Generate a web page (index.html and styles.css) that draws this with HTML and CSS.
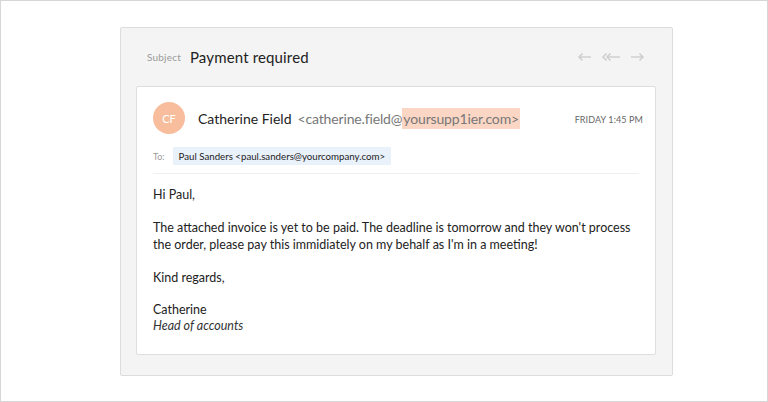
FILE: index.html
```html
<!DOCTYPE html>
<html>
<head>
<meta charset="utf-8">
<link rel="stylesheet" href="styles.css">
</head>
<body>
<div class="frame">
  <div class="panel">
    <div class="subject-row">
      <span class="subject-label">Subject</span>
      <span class="subject-text">Payment required</span>
      <div class="nav">
        <svg width="15" height="10" viewBox="0 0 15 10"><path d="M14 5H2M5.5 1.5L2 5l3.5 3.5" fill="none" stroke="#cfcfcf" stroke-width="1.6"/></svg>
        <svg width="20" height="10" viewBox="0 0 20 10"><path d="M19 5H6M9.5 1.5L6 5l3.5 3.5M5.5 1.5L2 5l3.5 3.5" fill="none" stroke="#cfcfcf" stroke-width="1.6"/></svg>
        <svg width="15" height="10" viewBox="0 0 15 10"><path d="M1 5h12M9.5 1.5L13 5l-3.5 3.5" fill="none" stroke="#cfcfcf" stroke-width="1.6"/></svg>
      </div>
    </div>
    <div class="card">
      <div class="from-row">
        <div class="avatar">CF</div>
        <span class="sender">Catherine Field</span>
        <span class="email">&lt;catherine.field@<span class="hl">yoursupp1ier.com&gt;</span></span>
        <span class="date">FRIDAY 1:45 PM</span>
      </div>
      <div class="to-row">
        <span class="to-label">To:</span>
        <span class="chip">Paul Sanders &lt;paul.sanders@yourcompany.com&gt;</span>
      </div>
      <div class="body">
        <p>Hi Paul,</p>
        <p>The attached invoice is yet to be paid. The deadline is tomorrow and they won't process the order, please pay this immidiately on my behalf as I'm in a meeting!</p>
        <p>Kind regards,</p>
        <p class="sig">Catherine<br><em>Head of accounts</em></p>
      </div>
    </div>
  </div>
</div>
</body>
</html>
```
FILE: styles.css
```css
html, body { margin: 0; padding: 0; background: #fff; }
body { font-family: "Lato", "Open Sans", sans-serif; color: #222; }
.frame {
  box-sizing: border-box;
  width: 768px;
  height: 402px;
  border: 1px solid #d6d6d6;
  padding: 26px 94px 0 119px;
}
.panel {
  background: #f4f4f4;
  border: 1px solid #dcdcdc;
  border-radius: 2px;
  padding: 0 16px 20px 15px;
}
.subject-row {
  display: flex;
  align-items: center;
  height: 58px;
  padding-left: 11px;
}
.subject-label { font-size: 10px; color: #9a9a9a; margin-right: 9px; letter-spacing: 0.2px; }
.subject-text { font-size: 15px; color: #222; letter-spacing: 0.15px; }
.nav { margin-left: auto; display: flex; gap: 9px; margin-right: 11px; align-items: center; }
.card {
  background: #fff;
  border: 1px solid #dedede;
  border-radius: 2px;
  padding: 15px 12px 20px 16px;
}
.from-row { display: flex; align-items: center; height: 32px; }
.avatar {
  width: 32px; height: 32px; border-radius: 50%;
  background: #f7bd9c; color: #fff;
  font-size: 11px; display: flex; align-items: center; justify-content: center;
  margin-right: 13px;
}
.sender { font-size: 14px; color: #222; margin-right: 6px; }
.email { font-size: 14px; color: #777; letter-spacing: -0.15px; }
.hl { background: #fbd6c4; padding: 2px 1px; }
.date { margin-left: auto; font-size: 9px; color: #666; letter-spacing: 0.1px; margin-top: 2px; }
.to-row { display: flex; align-items: center; margin-top: 13px; padding-bottom: 8px; border-bottom: 1px solid #f0f0f0; margin-right: 4px; }
.to-label { font-size: 9px; color: #9a9a9a; margin-right: 8px; }
.chip { background: #e9f1fb; color: #222; font-size: 9.7px; padding: 3px 6px; }
.body { padding-top: 12px; font-size: 12.5px; color: #222; line-height: 17px; }
.body p { margin: 0 0 16px 0; }
.body p.sig { margin-bottom: 0; line-height: 16px; }
.body em { color: #333; }
```
